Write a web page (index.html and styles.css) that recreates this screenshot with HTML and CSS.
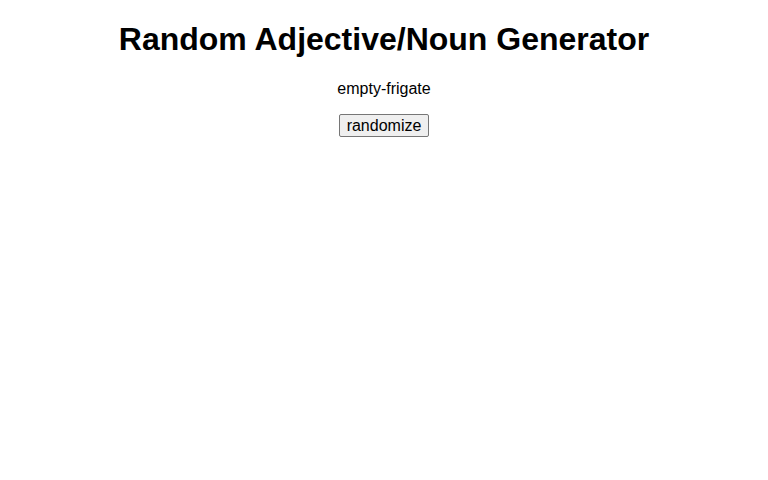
FILE: index.html
```html
<!DOCTYPE html>
<html lang="en">
  <head>
    <meta charset="UTF-8" />
    <meta name="viewport" content="width=device-width, initial-scale=1.0" />
    <title>Random Adjective/Noun Generator</title>

    <link rel="stylesheet" href="styles.css">
  </head>
  <body>
    <div class="generator">
      <h1>Random Adjective/Noun Generator</h1>
      <p id="result">empty-frigate</p>
      <p>
        <button type="button" class="button" onclick="randomize()">randomize</button>
      </p>
    </div>

    <script>
      const adjectives = ["empty", "quiet", "brave", "hollow", "rusty", "silent", "golden"];
      const nouns = ["frigate", "lantern", "meadow", "harbor", "falcon", "anchor", "comet"];

      function pick(list) {
        return list[Math.floor(Math.random() * list.length)];
      }

      function randomize() {
        document.getElementById("result").innerHTML = pick(adjectives) + "-" + pick(nouns);
      }
    </script>
  </body>
</html>
```

FILE: styles.css
```css
body {
  margin: 0 8px;
  font-family: "Liberation Sans", Arial, sans-serif;
  color: #000;
  background-color: #fff;
}

.generator {
  text-align: center;
}

.generator > h1 {
  font-size: 2em;
  margin: 0.67em 0;
}

.generator > p {
  font-size: 16px;
  margin: 1em 0;
}

.button {
  font-family: "Liberation Sans", Arial, sans-serif;
  font-size: 16px;
  padding: 2px 7px 1px;
  background-color: #efefef;
  border: 1px solid #767676;
  border-radius: 2px;
  color: #000;
  cursor: pointer;
}

.button:hover {
  background-color: #e5e5e5;
}
```
